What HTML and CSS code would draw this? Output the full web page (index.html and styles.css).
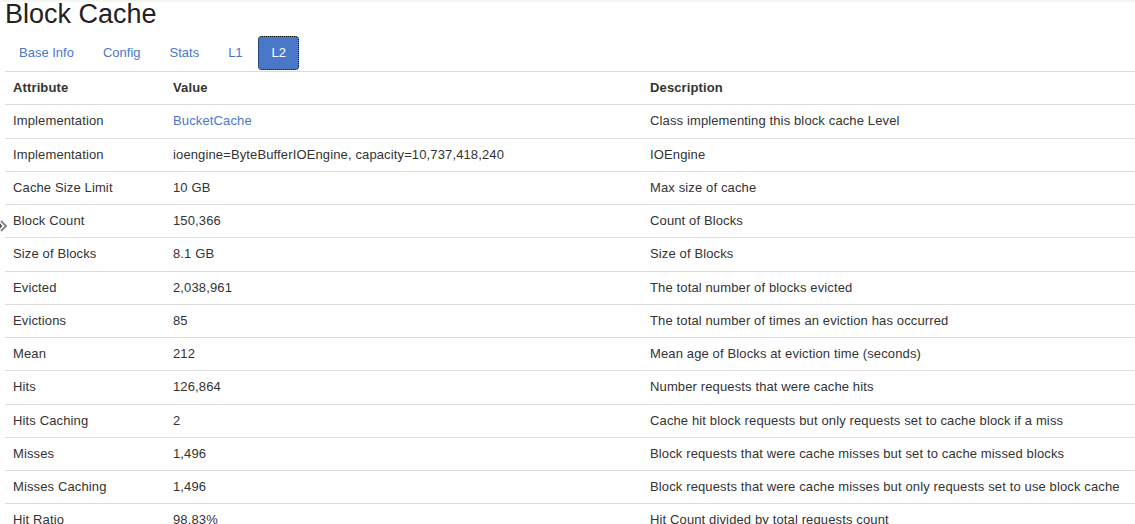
FILE: index.html
```html
<!DOCTYPE html>
<html lang="en">
<head>
  <meta charset="UTF-8" />
  <title>Block Cache</title>
  <link rel="stylesheet" href="styles.css">
</head>
<body>
  <div class="top-strip"></div>
  <div class="page">
    <h1 class="title">Block Cache</h1>
    <ul class="nav-pills">
      <li><a href="#">Base Info</a></li>
      <li><a href="#">Config</a></li>
      <li><a href="#">Stats</a></li>
      <li><a href="#">L1</a></li>
      <li class="active"><a href="#">L2</a></li>
    </ul>
    <table class="cache-table">
      <colgroup>
        <col class="col-attr">
        <col class="col-value">
        <col>
      </colgroup>
      <thead>
        <tr><th>Attribute</th><th>Value</th><th>Description</th></tr>
      </thead>
      <tbody>
        <tr><td>Implementation</td><td><a href="#">BucketCache</a></td><td>Class implementing this block cache Level</td></tr>
        <tr><td>Implementation</td><td>ioengine=ByteBufferIOEngine, capacity=10,737,418,240</td><td>IOEngine</td></tr>
        <tr><td>Cache Size Limit</td><td>10 GB</td><td>Max size of cache</td></tr>
        <tr><td>Block Count</td><td>150,366</td><td>Count of Blocks</td></tr>
        <tr><td>Size of Blocks</td><td>8.1 GB</td><td>Size of Blocks</td></tr>
        <tr><td>Evicted</td><td>2,038,961</td><td>The total number of blocks evicted</td></tr>
        <tr><td>Evictions</td><td>85</td><td>The total number of times an eviction has occurred</td></tr>
        <tr><td>Mean</td><td>212</td><td>Mean age of Blocks at eviction time (seconds)</td></tr>
        <tr><td>Hits</td><td>126,864</td><td>Number requests that were cache hits</td></tr>
        <tr><td>Hits Caching</td><td>2</td><td>Cache hit block requests but only requests set to cache block if a miss</td></tr>
        <tr><td>Misses</td><td>1,496</td><td>Block requests that were cache misses but set to cache missed blocks</td></tr>
        <tr><td>Misses Caching</td><td>1,496</td><td>Block requests that were cache misses but only requests set to use block cache</td></tr>
        <tr><td>Hit Ratio</td><td>98.83%</td><td>Hit Count divided by total requests count</td></tr>
      </tbody>
    </table>
  </div>
  <!-- sidebar toggle, mostly off the left edge -->
  <svg class="side-toggle" width="10" height="16" viewBox="0 0 10 16">
    <polyline points="-4,2 1,8 -4,14" fill="none" stroke="#555" stroke-width="2"/>
    <polyline points="1,3 6,8 1,13" fill="none" stroke="#888" stroke-width="2"/>
  </svg>
</body>
</html>
```

FILE: styles.css
```css
html, body {
  margin: 0;
}

* {
  box-sizing: border-box;
}

body {
  font-family: "Liberation Sans", Arial, sans-serif;
  font-size: 13px;
  letter-spacing: 0.13px;
  color: #333;
  background: #fff;
  overflow: hidden;
}

.top-strip {
  height: 2px;
  background: #f3f7f0;
}

.page {
  padding-left: 5px;
}

/* Title */

.title {
  margin: 0;
  font-size: 27px;
  font-weight: normal;
  letter-spacing: 0;
  line-height: 24px;
  color: #222;
}

/* Tabs */

.nav-pills {
  list-style: none;
  margin: 10px 0 1px;
  padding: 0;
  display: flex;
  letter-spacing: 0;
}

.nav-pills li + li {
  margin-left: 2px;
}

.nav-pills a {
  display: block;
  padding: 7px 13px 7px 14px;
  line-height: 20px;
  color: #4a78c9;
  text-decoration: none;
  border-radius: 4px;
}

.nav-pills .active a {
  background: #4a78c9;
  color: #fff;
  outline: 1px dotted #111;
  outline-offset: -1px;
}

/* Table */

.cache-table {
  width: calc(100% + 40px);
  border-collapse: collapse;
  table-layout: fixed;
}

.col-attr {
  width: 160px;
}

.col-value {
  width: 477px;
}

.cache-table th,
.cache-table td {
  padding: 8px;
  line-height: 16.25px;
  text-align: left;
  border-top: 1px solid #ddd;
  white-space: nowrap;
}

.cache-table th {
  font-weight: bold;
  border-bottom: 1px solid #ddd;
}

.cache-table thead + tbody tr:first-child td {
  border-top: 0;
}

.cache-table a {
  color: #4a78c9;
  text-decoration: none;
}

.side-toggle {
  position: absolute;
  left: 0;
  top: 218px;
}
```
